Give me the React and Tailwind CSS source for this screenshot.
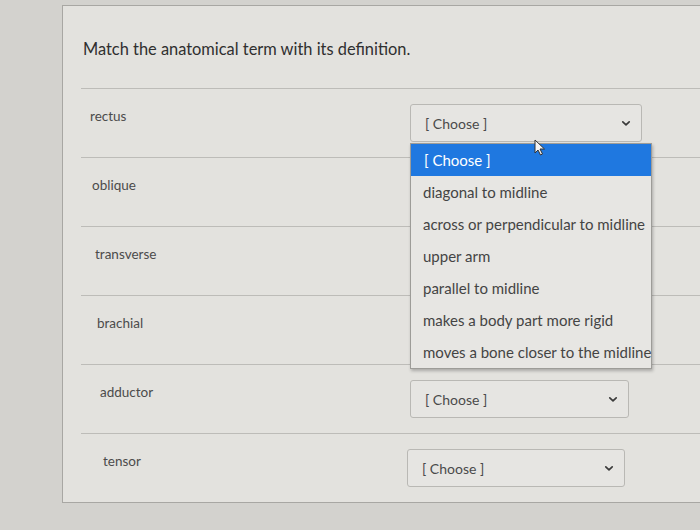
import React from "react";

const rows = [
  { term: "rectus", pad: "pl-[9px]", col: "w-[329px]", sel: "w-[232px]" },
  { term: "oblique", pad: "pl-[11px]", col: "w-[329px]", sel: null },
  { term: "transverse", pad: "pl-[14px]", col: "w-[329px]", sel: null },
  { term: "brachial", pad: "pl-[16px]", col: "w-[329px]", sel: null },
  { term: "adductor", pad: "pl-[19px]", col: "w-[329px]", sel: "w-[219px]" },
  { term: "tensor", pad: "pl-[22px]", col: "w-[326px]", sel: "w-[218px]" },
];

const options = [
  "[ Choose ]",
  "diagonal to midline",
  "across or perpendicular to midline",
  "upper arm",
  "parallel to midline",
  "makes a body part more rigid",
  "moves a  bone closer to the midline",
];

function Chevron() {
  return (
    <svg width="10" height="7" viewBox="0 0 10 7" className="shrink-0">
      <path d="M1.8 1.8 L5 4.8 L8.2 1.8" fill="none" stroke="#3a3a3a" strokeWidth="1.7" strokeLinecap="round" strokeLinejoin="round" />
    </svg>
  );
}

function Select({ cls }) {
  return (
    <div className={`${cls} h-[38px] mt-[15px] shrink-0 flex items-center justify-between pl-[14px] pr-[10px] border border-[#b9b8b4] rounded-[3px] bg-[#e6e5e2] text-[14px] text-[#4a4a4a]`}>
      <span className="whitespace-pre">[ Choose ]</span>
      <Chevron />
    </div>
  );
}

export default function App() {
  return (
    <div className="relative w-[700px] h-[530px] overflow-hidden bg-[#d3d2ce] pl-[62px] pt-[5px]" style={{ fontFamily: "Lato, 'Open Sans', sans-serif" }}>
      <div className="h-[498px] bg-[#e3e2de] border-l border-t border-b border-[#a8a7a3]">
        <div className="pl-[20px] pt-[31px] h-[82px] text-[16.4px] text-[#2f2f2f]">
          Match the anatomical term with its definition.
        </div>
        <div className="ml-[18px]">
          {rows.map((r) => (
            <div key={r.term} className="h-[69px] border-t border-[#bdbcb8] flex">
              <div className={`${r.col} ${r.pad} shrink-0 pt-[17px] whitespace-nowrap text-[13.5px] text-[#4b4b4b]`}>{r.term}</div>
              {r.sel && <Select cls={r.sel} />}
            </div>
          ))}
        </div>
      </div>

      {/* open dropdown list */}
      <div className="absolute left-[410px] top-[143px] w-[242px] bg-[#e7e6e3] border border-[#9d9c98] shadow-[1px_2px_3px_rgba(0,0,0,0.25)] text-[15px] text-[#444]">
        {options.map((o, i) => (
          <div
            key={o}
            className={
              i === 0
                ? "h-[32px] flex items-center pl-[13px] bg-[#1f78e0] text-white"
                : "h-[32px] flex items-center pl-[12px] whitespace-nowrap"
            }
          >
            {o}
          </div>
        ))}
      </div>

      {/* mouse cursor */}
      <svg className="absolute left-[534px] top-[139px]" width="12" height="17" viewBox="0 0 12 17">
        <path d="M1 1 L1 14 L4 11 L6.5 16 L8.5 15 L6 10 L10.5 10 Z" fill="#f4f4f4" stroke="#333" strokeWidth="1" strokeLinejoin="round" />
      </svg>
    </div>
  );
}
